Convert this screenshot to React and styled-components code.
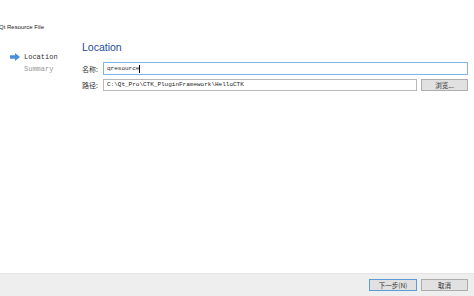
import React from 'react'
import styled, { createGlobalStyle } from 'styled-components'

const Global = createGlobalStyle`
	html, body { margin: 0; padding: 0; background: #fff; }
	body { font-family: "Liberation Sans", Arial, sans-serif; }
`

const Window = styled.div`
	width: 474px;
	height: 296px;
	display: flex;
	flex-direction: column;
	background: #fff;
	overflow: hidden;
`

const Caption = styled.div`
	height: 38px;
	padding: 24px 0 0 0;
	box-sizing: border-box;
	font-size: 6px;
	color: #222;
	margin-left: -1px;
`

const Body = styled.div`
	flex: 1;
	display: flex;
`

const Side = styled.div`
	width: 82px;
	padding-top: 15px;
	display: flex;
	flex-direction: column;
	gap: 4px;
`

const Step = styled.div`
	display: flex;
	align-items: center;
	gap: 4px;
	padding-left: ${p => (p.$active ? '10px' : '24px')};
	font-family: "Liberation Mono", "Noto Sans CJK SC", monospace;
	font-size: 7px;
	height: 8px;
	color: ${p => (p.$active ? '#333' : '#999')};
`

const Content = styled.div`
	flex: 1;
	padding: 3px 6px 0 0;
	display: flex;
	flex-direction: column;
`

const Heading = styled.div`
	font-size: 10.5px;
	color: #1e4c9c;
	height: 14px;
	margin-bottom: 7px;
`

const Row = styled.div`
	display: flex;
	align-items: center;
	gap: 4px;
	height: 13px;
	margin-bottom: 3px;
`

const Label = styled.div`
	width: 17px;
	font-family: "Noto Sans CJK SC", sans-serif;
	font-size: 7px;
	color: #333;
	white-space: nowrap;
`

const Field = styled.div`
	flex: 1;
	height: ${p => (p.$focus ? '13px' : '12px')};
	box-sizing: border-box;
	border: 1px solid ${p => (p.$focus ? '#7eb4ea' : '#b8b8b8')};
	display: flex;
	align-items: center;
	padding-left: 3px;
	font-family: "Liberation Mono", monospace;
	font-size: 6px;
	color: #222;
	background: #fff;
`

const Caret = styled.span`
	display: inline-block;
	width: 1px;
	height: 8px;
	background: #000;
`

const Button = styled.div`
	width: ${p => p.$w || 47}px;
	height: 12px;
	box-sizing: border-box;
	border: 1px solid ${p => (p.$primary ? '#5d9ad8' : '#adadad')};
	background: #e1e1e1;
	display: flex;
	align-items: center;
	justify-content: center;
	font-family: "Noto Sans CJK SC", sans-serif;
	font-size: 6.5px;
	color: #333;
`

const Footer = styled.div`
	height: 23px;
	background: #eeeeee;
	display: flex;
	justify-content: flex-end;
	align-items: center;
	gap: 4px;
	padding: 0 6px 0 0;
	box-sizing: border-box;
	border-top: 1px solid #e4e4e4;
`

function Arrow() {
	return (
		<svg width="10" height="8" viewBox="0 0 10 8">
			<path d="M0 2.2h5V0l5 4-5 4V5.8H0z" fill="#4a8ee0" />
		</svg>
	)
}

export default function App() {
	return (
		<Window>
			<Global />
			<Caption>Qt Resource File</Caption>
			<Body>
				<Side>
					<Step $active>
						<Arrow />
						Location
					</Step>
					<Step>Summary</Step>
				</Side>
				<Content>
					<Heading>Location</Heading>
					<Row>
						<Label>名称:</Label>
						<Field $focus>
							qresource
							<Caret />
						</Field>
					</Row>
					<Row>
						<Label>路径:</Label>
						<Field>C:\Qt_Pro\CTK_PluginFramework\HelloCTK</Field>
						<Button>浏览...</Button>
					</Row>
				</Content>
			</Body>
			<Footer>
				<Button $primary $w={48}>下一步(N)</Button>
				<Button>取消</Button>
			</Footer>
		</Window>
	)
}
